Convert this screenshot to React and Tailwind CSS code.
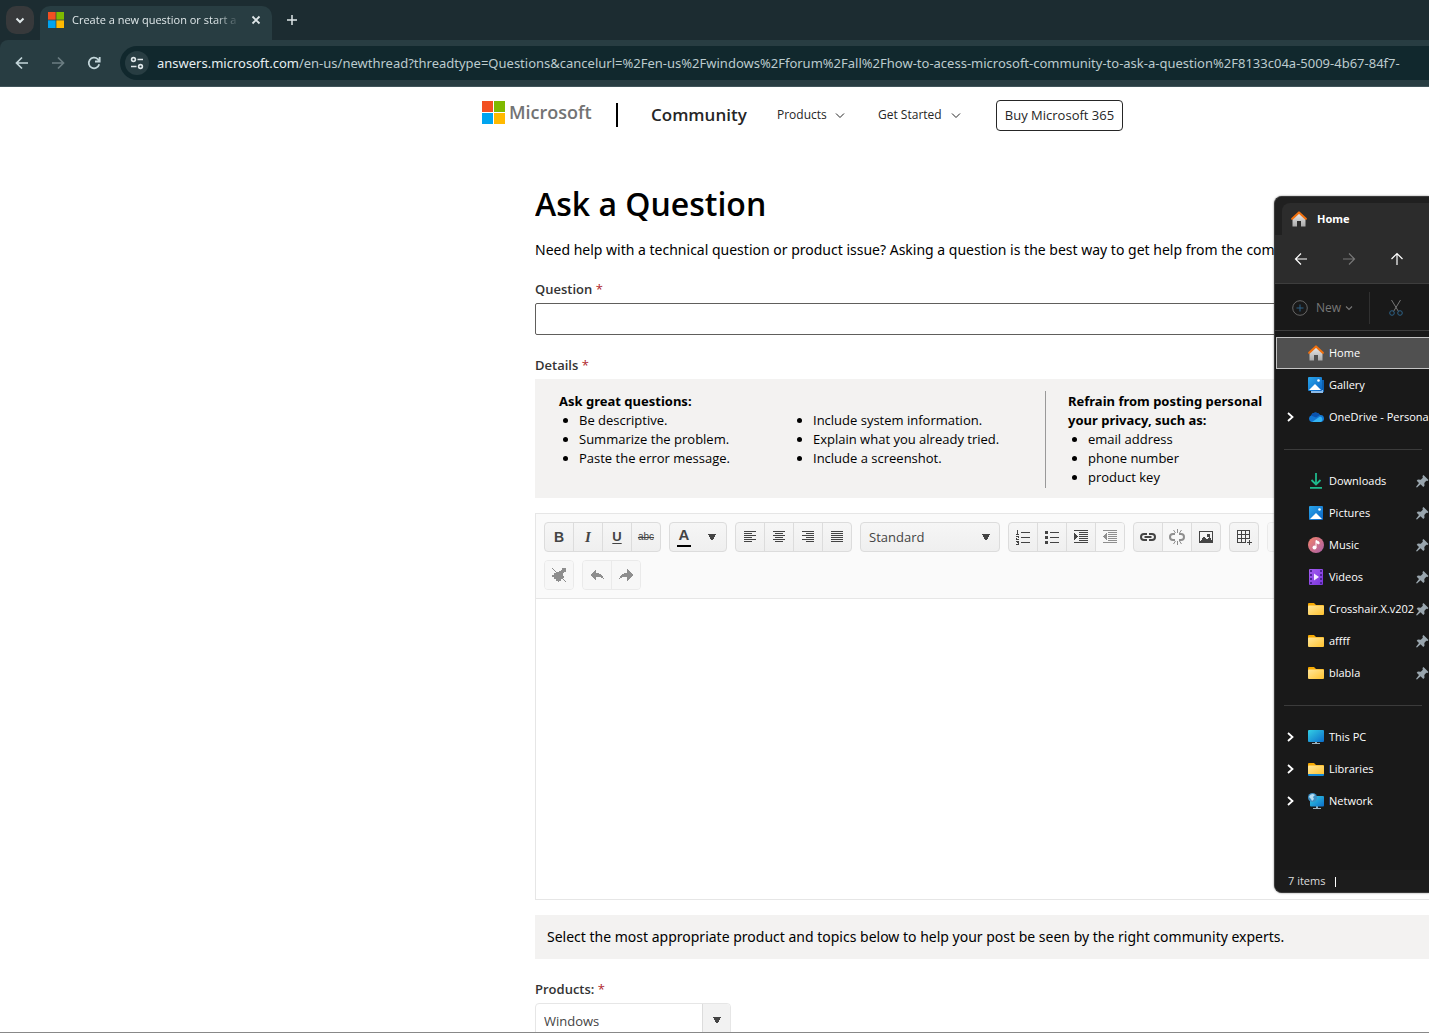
import React from "react";

function MsLogo({ className }) {
  return (
    <svg viewBox="0 0 23 23" className={className} aria-hidden="true">
      <path fill="#f25022" d="M0 0h11v11H0z" />
      <path fill="#7fba00" d="M12 0h11v11H12z" />
      <path fill="#00a4ef" d="M0 12h11v11H0z" />
      <path fill="#ffb900" d="M12 12h11v11H12z" />
    </svg>
  );
}

function Stroke({ d, className = "size-4", w = 1.5, box = 16 }) {
  return (
    <svg viewBox={`0 0 ${box} ${box}`} className={className} fill="none" stroke="currentColor" strokeWidth={w} aria-hidden="true">
      <path d={d} />
    </svg>
  );
}

function Solid({ d, className = "size-4" }) {
  return (
    <svg viewBox="0 0 16 16" className={className} fill="currentColor" shapeRendering="crispEdges" aria-hidden="true">
      <path d={d} />
    </svg>
  );
}

const BACK = "M14 8H2.500M8 2.500 2.500 8 8 13.500";
const FORWARD = "M2 8h11.500M8 2.500 13.500 8 8 13.500";
const UP = "M8 14V2.500M2.500 8 8 2.500 13.500 8";

function Browser() {
  return (
    <header className="shrink-0 overflow-hidden bg-[#1c2c31] text-[#dfe7e9]">
      <div className="flex h-10 items-end">
        <button aria-label="Search tabs" className="mb-1.5 ml-1.5 grid size-7 place-items-center rounded-[10px] bg-[#37393b]">
          <Stroke d="m4.500 6.500 3.500 3.500 3.500-3.500" w={2} />
        </button>
        <div className="ml-1.5 flex h-[34px] w-[232px] items-center rounded-t-[10px] bg-[#283d42] px-2">
          <MsLogo className="mb-1.5 size-4 shrink-0" />
          <span className="mb-1.5 ml-2 w-[168px] whitespace-nowrap text-[11px] leading-4 [mask-image:linear-gradient(to_right,black_85%,transparent)]">
            Create a new question or start a
          </span>
          <button aria-label="Close tab" className="mb-1.5 ml-2">
            <Stroke d="m4.500 4.500 7 7m0-7-7 7" w={1.8} />
          </button>
        </div>
        <button aria-label="New tab" className="mb-3 ml-3">
          <Stroke d="M8 3v10M3 8h10" />
        </button>
      </div>
      <div className="flex h-[47px] items-center rounded-tl-lg border-b border-[#40545a] bg-[#283d42] pl-3.5">
        <button aria-label="Back" className="text-[#c3d6da]"><Stroke d={BACK} w={1.7} /></button>
        <button aria-label="Forward" className="ml-5 text-[#6b7d82]"><Stroke d={FORWARD} w={1.7} /></button>
        <button aria-label="Reload" className="ml-5 text-[#c3d6da]">
          <Stroke d="M13.200 9.300A5.300 5.300 0 1 1 11.800 4.200L13.500 6M13.700 2v4.500H9" w={1.8} />
        </button>
        <div className="ml-[18px] flex h-[34px] min-w-0 flex-1 items-center rounded-l-full bg-[#11282d] pl-[5px]">
          <button aria-label="View site information" className="grid size-6 shrink-0 place-items-center rounded-full bg-[#283d42]">
            <svg viewBox="0 0 16 16" className="size-4" fill="none" stroke="currentColor" strokeWidth="1.600" aria-hidden="true">
              <circle cx="4.500" cy="4.500" r="1.900" /><path d="M8.500 4.500H14M2 11.500h5.500" /><circle cx="11.500" cy="11.500" r="1.900" />
            </svg>
          </button>
          <span className="ml-2 pt-px whitespace-nowrap font-['Noto_Sans',sans-serif] text-[13px] text-[#bccbce]">
            <span className="text-[#e6eef0]">answers.microsoft.com</span>/en-us/newthread?threadtype=Questions&amp;cancelurl=%2Fen-us%2Fwindows%2Fforum%2Fall%2Fhow-to-acess-microsoft-community-to-ask-a-question%2F8133c04a-5009-4b67-84f7-
          </span>
        </div>
      </div>
    </header>
  );
}

function SiteNav() {
  return (
    <nav className="flex h-14 items-center whitespace-nowrap pl-[482px] text-[#262626]">
      <a href="#microsoft" className="flex w-[109px] items-center gap-1 pb-1.5">
        <MsLogo className="size-[23px] shrink-0" />
        <span className="text-lg leading-6 font-semibold text-[#737373]">Microsoft</span>
      </a>
      <span className="ml-[25px] h-6 w-0.5 bg-black" />
      <a href="#community" className="ml-[33px] w-[97px] text-[17px] font-semibold">Community</a>
      <button className="ml-[29px] flex w-[67px] items-center justify-between text-xs">
        Products <Stroke d="m4 6.500 4 4 4-4" w={1} className="-mr-1 size-4" />
      </button>
      <button className="ml-[34px] flex w-[82px] items-center justify-between text-xs">
        Get Started <Stroke d="m4 6.500 4 4 4-4" w={1} className="-mr-1 size-4" />
      </button>
      <a href="#buy" className="ml-9 flex h-[31px] w-[127px] items-center justify-center rounded-sm border border-[#262626] pt-px text-[13px]">
        Buy Microsoft 365
      </a>
    </nav>
  );
}

function Group({ children, faded, joined }) {
  return (
    <div className={`flex h-[30px] shrink-0 overflow-hidden rounded border bg-linear-to-b text-[#444] ${joined ? "" : "divide-x"} ${faded ? "divide-[#eaeaea] border-[#eaeaea] from-[#f8f8f8] to-[#f4f4f4]" : "divide-[#dcdcdc] border-[#dcdcdc] from-[#f6f6f6] to-[#efefef]"}`}>
      {children}
    </div>
  );
}

function Tool({ label, children, off }) {
  return (
    <button aria-label={label} className={`grid w-[29px] place-items-center last:w-7 ${off ? "bg-[#f7f7f7] text-[#8e8e8e]" : ""}`}>
      {children}
    </button>
  );
}

const BRUSH = "M1 8h2V6h3V5h2l5 5-1 2h-2v2H8v1H7v-1H5v-2H3v-2H1zM8 4h2V3h1V1h4v4h-2v1h-1v2h-1z";
const UNDO = "M1 8l6-6v4q7 0 8 7-3-4-8-3v4z";
const REDO = "M15 8 9 2v4q-7 0-8 7 3-4 8-3v4z";
const CARET = "M4 5h8v1h-1v2h-1v2H9v1H7v-1H6V8H5V6H4z";

function Toolbar() {
  return (
    <div className="flex flex-col gap-2 border-b border-[#e6e6e6] bg-[#fafafa] p-2">
      <div className="flex gap-2">
        <Group>
          <Tool label="Bold"><b className="font-['Liberation_Sans',sans-serif] text-sm leading-4">B</b></Tool>
          <Tool label="Italic"><i className="font-['Liberation_Serif',serif] text-[15px] leading-4 font-bold">I</i></Tool>
          <Tool label="Underline"><u className="font-['Liberation_Sans',sans-serif] text-[13px] leading-4 font-bold underline-offset-2">U</u></Tool>
          <Tool label="Strikethrough"><s className="font-['Liberation_Sans',sans-serif] text-[10px] leading-4">abc</s></Tool>
        </Group>
        <Group joined>
          <button aria-label="Text color" className="flex w-7 justify-center pt-1">
            <span className="h-5 w-3.5 border-b-2 border-black text-center font-['Liberation_Sans',sans-serif] text-[15px] leading-4 font-bold">A</span>
          </button>
          <button aria-label="Choose text color" className="grid w-7 place-items-center"><Solid d={CARET} /></button>
        </Group>
        <Group>
          <Tool label="Align left"><Solid d="M2 2h12v1H2zM2 4h8v1H2zM2 6h12v1H2zM2 8h8v1H2zM2 10h12v1H2zM2 12h8v1H2z" /></Tool>
          <Tool label="Align center"><Solid d="M2 2h12v1H2zM4 4h8v1H4zM2 6h12v1H2zM4 8h8v1H4zM2 10h12v1H2zM4 12h8v1H4z" /></Tool>
          <Tool label="Align right"><Solid d="M2 2h12v1H2zM6 4h8v1H6zM2 6h12v1H2zM6 8h8v1H6zM2 10h12v1H2zM6 12h8v1H6z" /></Tool>
          <Tool label="Justify"><Solid d="M2 2h12v1H2zM2 4h12v1H2zM2 6h12v1H2zM2 8h12v1H2zM2 10h12v1H2zM2 12h12v1H2z" /></Tool>
        </Group>
        <Group>
          <label className="flex w-[138px] items-center pr-[5px] pl-2">
            <select aria-label="Format" className="min-w-0 flex-1 appearance-none pt-0.5 text-[13px] outline-none">
              <option>Standard</option>
            </select>
            <Solid d={CARET} />
          </label>
        </Group>
        <Group>
          <Tool label="Numbered list"><Solid d="M2 1h1v4h1v1H1V5h1V2H1zM1 7h3v2H2v1h2v1H1V9h2V8H1zM1 12h3v4H1v-1h2v-1H2v-1H1zM6 3h9v1H6zM6 8h9v1H6zM6 13h9v1H6z" /></Tool>
          <Tool label="Bulleted list"><Solid d="M1 2h3v3H1zM1 7h3v3H1zM1 12h3v3H1zM6 3h9v1H6zM6 8h9v1H6zM6 13h9v1H6z" /></Tool>
          <Tool label="Indent"><Solid d="M1 1h14v1H1zM6 3h9v1H6zM6 5h9v1H6zM6 7h9v1H6zM6 9h9v1H6zM6 11h9v1H6zM1 13h14v1H1zM1 4h1v1h1v1h1v1h1v1H4v1H3v1H2v1H1z" /></Tool>
          <Tool label="Outdent" off><Solid d="M1 1h14v1H1zM6 3h9v1H6zM6 5h9v1H6zM6 7h9v1H6zM6 9h9v1H6zM6 11h9v1H6zM1 13h14v1H1zM5 4v7H4v-1H3V9H2V8H1V7h1V6h1V5h1V4z" /></Tool>
        </Group>
        <Group>
          <Tool label="Insert link">
            <svg viewBox="0 0 16 16" className="size-4" fill="none" stroke="currentColor" strokeWidth="2" aria-hidden="true">
              <path d="M7 5H4a3 3 0 0 0 0 6h3M9 5h3a3 3 0 0 1 0 6H9M4.500 8h7" />
            </svg>
          </Tool>
          <Tool label="Remove link" off>
            <svg viewBox="0 0 16 16" className="size-4" fill="none" stroke="currentColor" strokeWidth="2" aria-hidden="true">
              <path d="M6 5H4a3 3 0 0 0 0 6h2M10 5h2a3 3 0 0 1 0 6h-2" />
              <path strokeWidth="1" d="M8.500 0v4M8.500 12v4M4.500 1l2 3M12.500 1l-2 3M4.500 15l2-3M12.500 15l-2-3" />
            </svg>
          </Tool>
          <Tool label="Insert image"><Solid d="M1 2h14v12H1zM2 3v9h1v-1h1V9h1V8h2v1h1v1h2V9h1V8h1v1h1v2h1V3zM9 5h3v3H9z" /></Tool>
        </Group>
        <Group>
          <Tool label="Insert table"><Solid d="M1 1h13v9h-1V2H2v11h8v1H1zM5 2h1v11H5zM9 2h1v11H9zM2 5h11v1H2zM2 9h11v1H2zM13 11h1v2h2v1h-2v2h-1v-2h-2v-1h2z" /></Tool>
        </Group>
        <Group faded><Tool label="Table options" off /></Group>
      </div>
      <div className="flex gap-2">
        <Group faded>
          <Tool label="Clear formatting" off>
            <span className="grid"><Solid d={BRUSH} className="col-start-1 row-start-1 size-4" /><Stroke d="m1 1 14 14" w={1} className="col-start-1 row-start-1 size-4" /></span>
          </Tool>
        </Group>
        <Group faded>
          <Tool label="Undo" off><Solid d={UNDO} /></Tool>
          <Tool label="Redo" off><Solid d={REDO} /></Tool>
        </Group>
      </div>
    </div>
  );
}

function Label({ htmlFor, children }) {
  return (
    <label htmlFor={htmlFor} className="block text-[13px] leading-5 font-semibold text-[#333]">
      {children} <span className="font-normal text-[#b0262c]">*</span>
    </label>
  );
}

function Bullets({ items }) {
  return <ul className="list-disc pl-5">{items.map((t) => <li key={t}>{t}</li>)}</ul>;
}

function QuestionForm() {
  return (
    <main className="ml-[535px] overflow-hidden whitespace-nowrap text-black">
      <h1 className="mt-[38px] text-[32px] leading-[46px] font-semibold">Ask a Question</h1>
      <p className="mt-[13px] font-['Noto_Sans',sans-serif] text-sm leading-5">
        Need help with a technical question or product issue? Asking a question is the best way to get help from the community.
      </p>
      <div className="mt-[19px]"><Label htmlFor="question">Question</Label></div>
      <input id="question" className="mt-1 -mr-2 block h-8 w-[calc(100%+8px)] rounded-xs border border-[#605e5c] px-2 text-sm outline-none" />
      <div className="mt-5"><Label htmlFor="details">Details</Label></div>
      <div className="mt-1 flex h-[119px] bg-[#f3f2f1] pt-3 pb-2.5 pl-6 text-[13px] leading-[19px]">
        <section className="w-[234px] shrink-0 pt-px">
          <h2 className="font-['Noto_Sans',sans-serif] font-bold">Ask great questions:</h2>
          <Bullets items={["Be descriptive.", "Summarize the problem.", "Paste the error message."]} />
        </section>
        <section className="w-[252px] shrink-0 pt-5">
          <Bullets items={["Include system information.", "Explain what you already tried.", "Include a screenshot."]} />
        </section>
        <section className="border-l border-[#999] pt-px pl-[22px]">
          <h2 className="font-['Noto_Sans',sans-serif] font-bold">Refrain from posting personal<br />your privacy, such as:</h2>
          <Bullets items={["email address", "phone number", "product key"]} />
        </section>
      </div>
      <div className="mt-[15px] -mr-2 border border-[#e6e6e6]">
        <Toolbar />
        <textarea id="details" className="block h-[300px] w-full resize-none p-2 text-sm outline-none" />
      </div>
      <p className="mt-[15px] bg-[#f3f2f1] p-3 font-['Noto_Sans',sans-serif] text-sm leading-5">
        Select the most appropriate product and topics below to help your post be seen by the right community experts.
      </p>
      <div className="mt-5"><Label htmlFor="products">Products:</Label></div>
      <div className="mt-1 flex h-9 w-[196px] rounded border border-[#e6e6e6] text-[#444]">
        <select id="products" className="min-w-0 flex-1 appearance-none px-2 pt-0.5 text-[13px] outline-none">
          <option>Windows</option>
        </select>
        <span className="grid w-7 place-items-center rounded-r border-l border-[#dcdcdc] bg-[#f2f2f2] pb-0.5"><Solid d={CARET} /></span>
      </div>
    </main>
  );
}

function Icon({ name }) {
  return (
    <svg viewBox="0 0 16 16" className="size-4 shrink-0" aria-hidden="true">
      <defs>
        <linearGradient id="blue" x1="0" y1="0" x2="1" y2="1"><stop stopColor="#2aa5ea" /><stop offset="1" stopColor="#0a63c4" /></linearGradient>
        <linearGradient id="teal" x1="0" y1="0" x2="1" y2="1"><stop stopColor="#33cfe4" /><stop offset="1" stopColor="#0c6dca" /></linearGradient>
        <linearGradient id="gold" x1="0" y1="0" x2="1" y2="1"><stop stopColor="#ffe79b" /><stop offset="1" stopColor="#ffc22e" /></linearGradient>
        <linearGradient id="rose" x1="0" y1="0" x2="1" y2="1"><stop stopColor="#f4836a" /><stop offset="1" stopColor="#a95fa8" /></linearGradient>
        <linearGradient id="wall" x1="0" y1="0" x2="0" y2="1"><stop stopColor="#ececec" /><stop offset="1" stopColor="#a9a9a9" /></linearGradient>
        <linearGradient id="grape" x1="0" y1="0" x2="1" y2="1"><stop stopColor="#a45bf0" /><stop offset="1" stopColor="#7a36dc" /></linearGradient>
      </defs>
      {name === "home" && <><path fill="url(#wall)" d="M1.500 7.500 8 2l6.500 5.500V15.500H10V10H6v5.500H1.500z" /><path d="M1.200 7.800 8 1.500l6.800 6.300" fill="none" stroke="#f0700f" strokeWidth="2.200" strokeLinecap="round" strokeLinejoin="round" /></>}
      {name === "gallery" && <><path fill="#0c5fae" d="M5 3h11v12H5z" /><path fill="#8dbbe8" d="M3 13h12v3H3z" /><rect width="14" height="14" rx="1" fill="url(#blue)" /><path fill="#fff" d="m1 13 6-6 6 6z" /><circle cx="10.500" cy="3.500" r="1.300" fill="#fff" /></>}
      {name === "cloud" && <><path fill="#1276d3" d="M3.500 13A3.500 3.500 0 0 1 3 6.500 5 5 0 0 1 12 6a3.500 3.500 0 0 1 1 7z" /><path fill="#0a52ad" d="M3 6.500A5 5 0 0 1 12 6L8 8.500z" /><path fill="#35b4f2" d="M4 13 12 7.500A3 3 0 0 1 13 13z" /></>}
      {name === "download" && <path fill="none" stroke="#1fb98c" strokeWidth="1.800" d="M8 0v11M3.500 7 8 11.500 12.500 7M2 14.800h12" />}
      {name === "pictures" && <><rect x="1" y="1" width="14" height="14" rx="1" fill="url(#blue)" /><path fill="#fff" d="m2 14 6-6 6 6z" /><circle cx="11.500" cy="4.500" r="1.300" fill="#fff" /></>}
      {name === "music" && <><circle cx="8" cy="8" r="8" fill="url(#rose)" /><circle cx="6.500" cy="10.500" r="2" fill="#fff" /><path d="M8 10.500V3.500l3 1.500v2L8 5.500" fill="#fff" stroke="#fff" /></>}
      {name === "videos" && <><rect x="1" width="14" height="16" rx="1" fill="url(#grape)" /><path stroke="#4c2495" strokeWidth="2" strokeDasharray="2 2" d="M3 1v14M13 1v14" /><path fill="#f4eaff" d="M6 4.500 11 8l-5 3.500z" /></>}
      {(name === "folder" || name === "libraries") && <><path fill="#f7a900" d="M0 3q0-1 1-1h5l2 2h7q1 0 1 1v4H0z" /><rect y="4.500" width="16" height="9.500" rx="1" fill="url(#gold)" /></>}
      {name === "libraries" && <path fill="#1389d8" d="M0 13h16v1q0 1-1 1H1q-1 0-1-1z" />}
      {name === "pc" && <><path fill="#9eb2bd" d="M7 12h2v2h3v1H4v-1h3z" /><rect y="1" width="16" height="12" rx="1" fill="url(#teal)" /></>}
      {name === "network" && <><path fill="#9eb2bd" d="M8 13h2v2h3v1H5v-1h3z" /><rect x="2" y="3" width="14" height="10.500" rx="1" fill="url(#teal)" /><circle cx="4.500" cy="4.500" r="4.500" fill="#3d8fc4" /><path fill="#b8def2" d="M1 4q1-3 4-3l2 1-2 2 1 2-2 2-1-2z" /></>}
    </svg>
  );
}

function Pin() {
  return (
    <svg viewBox="0 0 16 16" className="absolute -right-0.5 size-4 text-[#99a5ad]" fill="currentColor" aria-label="Pinned">
      <path d="m9.500 2 5 5-1 1-1.200-.2-2 2.200.2 2.800-1.200 1.200-2.700-2.700L3 14.500l-1-.5 3-4-2.300-2.300 1.200-1.200 2.900.2 2-2-.3-1.700z" />
    </svg>
  );
}

const PLACES = [
  ["home", "Home"], ["gallery", "Gallery"], ["cloud", "OneDrive - Persona", "open"], null,
  ["download", "Downloads", "pin"], ["pictures", "Pictures", "pin"], ["music", "Music", "pin"], ["videos", "Videos", "pin"],
  ["folder", "Crosshair.X.v202", "pin"], ["folder", "affff", "pin"], ["folder", "blabla", "pin"], null,
  ["pc", "This PC", "open"], ["libraries", "Libraries", "open"], ["network", "Network", "open"],
];

function Explorer() {
  return (
    <aside className="absolute top-[196px] right-0 flex h-[697px] w-[155px] flex-col overflow-hidden rounded-l-lg border-y border-l border-[#3a3a3a] bg-[#191919] whitespace-nowrap text-white shadow-[0_0_2px_rgba(0,0,0,0.5)]">
      <div className="bg-[#202020] pt-1.5 pl-[7px]">
        <div className="flex h-8 items-center gap-2.5 rounded-tl-lg bg-[#2c2c2c] pl-[9px] text-xs font-bold">
          <Icon name="home" /><span className="font-['Noto_Sans',sans-serif] text-[11px]">Home</span>
        </div>
      </div>
      <div className="flex h-[49px] items-center gap-8 border-b border-[#3d3d3d] bg-[#2c2c2c] pl-[18px]">
        <button aria-label="Back"><Stroke d={BACK} w={1.2} /></button>
        <button aria-label="Forward" className="text-[#777]"><Stroke d={FORWARD} w={1.2} /></button>
        <button aria-label="Up"><Stroke d={UP} w={1.2} /></button>
      </div>
      <div className="flex h-[47px] shrink-0 items-center border-b border-[#3d3d3d] pt-0.5 pl-[17px] text-[#777]">
        <button className="flex items-center text-xs">
          <svg viewBox="0 0 16 16" className="mr-2 size-4" fill="none" aria-hidden="true">
            <circle cx="8" cy="8" r="7.300" stroke="#666" /><path d="M8 4.500v7M4.500 8h7" stroke="#2c6186" />
          </svg>
          New
          <Stroke d="m5 6.500 3 3 3-3" w={1.1} />
        </button>
        <span className="ml-3 h-8 w-px bg-[#303030]" />
        <button aria-label="Cut" className="ml-[18px]">
          <svg viewBox="0 0 16 16" className="size-4" fill="none" aria-hidden="true">
            <path d="m3.500 0 7 11.500M12.500 0l-7 11.500" stroke="#777" /><circle cx="4" cy="13" r="2.300" stroke="#2c6186" /><circle cx="12" cy="13" r="2.300" stroke="#2c6186" />
          </svg>
        </button>
      </div>
      <ul className="mt-1.5 flex-1">
        {PLACES.map((p, i) =>
          p === null ? (
            <li key={i} className="flex h-8 items-center pr-[7px] pl-[9px]"><span className="h-px w-full bg-[#3b3b3b]" /></li>
          ) : (
            <li key={i} className={`relative ml-px flex h-8 items-center border text-[11px] ${i === 0 ? "-mr-0.5 border-[#c4c4c4] bg-[#505050]" : "border-transparent"}`}>
              <span className="w-[31px] shrink-0 pl-1.5">{p[2] === "open" && <Stroke d="m5 4 4.500 4L5 12" w={1.8} className="size-4" />}</span>
              <Icon name={p[0]} />
              <span className="ml-[5px]">{p[1]}</span>
              {p[2] === "pin" && <Pin />}
            </li>
          )
        )}
      </ul>
      <div className="flex h-[22px] items-center bg-[#1c1c1c] pt-px pl-[13px] text-[11px] text-[#dcdcdc]">
        7 items<span className="ml-2.5 h-2.5 w-px bg-white" />
      </div>
    </aside>
  );
}

export default function App() {
  return (
    <div className="relative flex h-screen flex-col overflow-hidden border-b border-[#888] bg-white font-['Open_Sans','Noto_Sans',sans-serif]">
      <Browser />
      <div className="min-h-0 flex-1 overflow-hidden">
        <SiteNav />
        <QuestionForm />
      </div>
      <Explorer />
    </div>
  );
}
